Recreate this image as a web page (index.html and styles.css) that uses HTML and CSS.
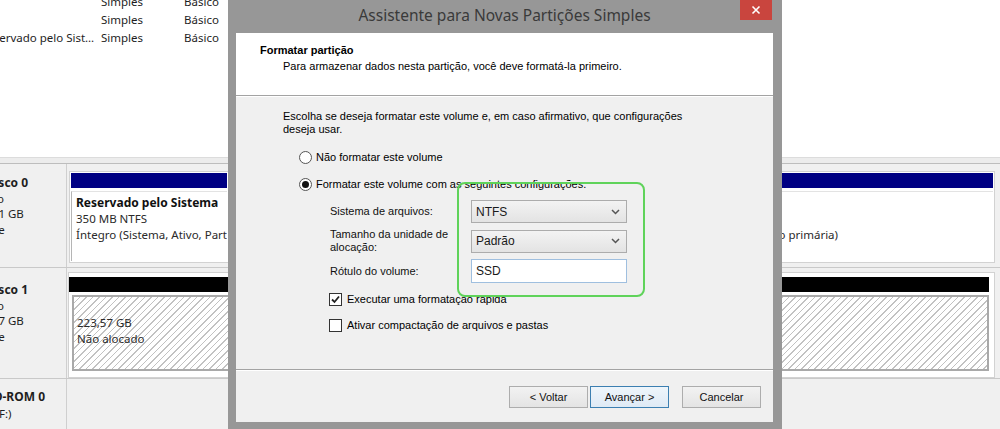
FILE: index.html
```html
<!DOCTYPE html>
<html lang="pt-BR">
<head>
<meta charset="utf-8">
<title>Assistente para Novas Partições Simples</title>
<link rel="stylesheet" href="styles.css">
</head>
<body>
<div class="mmc">
  <div class="vol-list">
    <div class="vol-rows">
      <div class="vol-row"><span class="c1"></span><span class="c2">Simples</span><span class="c3">Básico</span></div>
      <div class="vol-row"><span class="c1"></span><span class="c2">Simples</span><span class="c3">Básico</span></div>
      <div class="vol-row"><span class="c1">Reservado pelo Sistema</span><span class="c2">Simples</span><span class="c3">Básico</span></div>
    </div>
  </div>
  <div class="splitter"></div>

  <div class="disk disk0">
    <div class="disk-label">
      <div class="dl-title">Disco 0</div>
      <div>Básico</div>
      <div>931,51 GB</div>
      <div>Online</div>
    </div>
    <div class="disk-map">
      <div class="part part-sys">
        <div class="bar bar-blue"></div>
        <div class="part-body">
          <div class="pb-name">Reservado pelo Sistema</div>
          <div>350 MB NTFS</div>
          <div>Íntegro (Sistema, Ativo, Partição primária)</div>
        </div>
      </div>
      <div class="part part-c">
        <div class="bar bar-blue"></div>
        <div class="part-body">
          <div class="pb-name">(C:)</div>
          <div>931,17 GB NTFS</div>
          <div class="pb-long">Íntegro (Inicialização, Arquivo de Paginação, Despejo de Memória, Partição primária)</div>
        </div>
      </div>
    </div>
  </div>

  <div class="disk disk1">
    <div class="disk-label">
      <div class="dl-title">Disco 1</div>
      <div>Básico</div>
      <div>223,57 GB</div>
      <div>Online</div>
    </div>
    <div class="disk-map">
      <div class="part part-free">
        <div class="bar bar-black"></div>
        <div class="part-body hatch">
          <div class="pb-name">&nbsp;</div>
          <div>223,57 GB</div>
          <div>Não alocado</div>
        </div>
      </div>
    </div>
  </div>

  <div class="disk disk-cd">
    <div class="disk-label">
      <div class="dl-title">CD-ROM 0</div>
      <div>DVD (F:)</div>
    </div>
    <div class="disk-map"></div>
  </div>
</div>

<div class="dialog">
  <div class="titlebar">
    <span class="title">Assistente para Novas Partições Simples</span>
    <span class="close">
      <svg width="10" height="10" viewBox="0 0 10 10"><path d="M1.5 1.5 L8.5 8.5 M8.5 1.5 L1.5 8.5" stroke="#fff" stroke-width="1.6"/></svg>
    </span>
  </div>
  <div class="client">
    <div class="wiz-head">
      <div class="wh-title">Formatar partição</div>
      <div class="wh-sub">Para armazenar dados nesta partição, você deve formatá-la primeiro.</div>
    </div>
    <div class="wiz-body">
      <p class="intro">Escolha se deseja formatar este volume e, em caso afirmativo, que configurações<br>deseja usar.</p>
      <div class="radio r1"><span class="rb"></span>Não formatar este volume</div>
      <div class="radio r2"><span class="rb on"></span>Formatar este volume com as seguintes configurações.</div>
      <div class="fmt-grid">
        <span class="fl">Sistema de arquivos:</span>
        <div class="combo"><span>NTFS</span><svg width="9" height="6" viewBox="0 0 9 6"><path d="M1 1 L4.5 4.5 L8 1" fill="none" stroke="#555" stroke-width="1.5"/></svg></div>
        <span class="fl fl2">Tamanho da unidade de<br>alocação:</span>
        <div class="combo"><span>Padrão</span><svg width="9" height="6" viewBox="0 0 9 6"><path d="M1 1 L4.5 4.5 L8 1" fill="none" stroke="#555" stroke-width="1.5"/></svg></div>
        <span class="fl">Rótulo do volume:</span>
        <div class="textbox">SSD</div>
      </div>
      <div class="check c-1"><span class="cb"><svg width="11" height="11" viewBox="0 0 11 11"><path d="M2 5.5 L4.5 8 L9 2.5" fill="none" stroke="#222" stroke-width="1.8"/></svg></span>Executar uma formatação rápida</div>
      <div class="check c-2"><span class="cb"></span>Ativar compactação de arquivos e pastas</div>
    </div>
    <div class="wiz-foot">
      <button class="btn">&lt; Voltar</button>
      <button class="btn btn-default">Avançar &gt;</button>
      <button class="btn btn-cancel">Cancelar</button>
    </div>
  </div>
  <div class="highlight"></div>
</div>
</body>
</html>
```

FILE: styles.css
```css
* { box-sizing: border-box; margin: 0; padding: 0; }
html, body { width: 1000px; height: 429px; overflow: hidden; }
body {
  background: #f0f0f0;
  font-family: "Noto Sans", "Open Sans", sans-serif;
  font-size: 11.5px;
  color: #1e1e1e;
  position: relative;
}

/* ---------- background: disk management ---------- */
.mmc { width: 1000px; height: 429px; overflow: hidden; }

.vol-list { height: 157px; background: #fff; overflow: hidden; }
.vol-rows { margin-top: -7px; }
.vol-row { display: flex; height: 18px; line-height: 18px; white-space: nowrap; }
.c1 {
  width: 121px; margin-left: -20px; padding-right: 6px;
  overflow: hidden; text-overflow: ellipsis;
}
.c2 { width: 83px; }
.c3 { width: 80px; }

.splitter {
  height: 7px;
  background: #ececec;
  border-top: 1px solid #dcdcdc;
  border-bottom: 1px solid #bdbdbd;
}

.disk { display: flex; border-bottom: 1px solid #c9c9c9; box-shadow: 0 1px 0 #fff; }
.disk0 { height: 104px; }
.disk1 { height: 111px; }
.disk-cd { height: 60px; border-bottom: none; }

.disk-label {
  width: 67px;
  flex: none;
  padding-top: 11px;
  line-height: 15.5px;
  white-space: nowrap;
  overflow: hidden;
  border-right: 1px solid #cfcfcf;
  box-shadow: 1px 0 0 #fff;
  background: #f0f0f0;
}
.disk-label > div { margin-left: -31px; }
.disk-label .dl-title { margin-left: -14px; font-weight: 700; font-size: 12px; }
.disk1 .disk-label { padding-top: 14px; }
.disk-cd .disk-label { padding-top: 9px; line-height: 17px; }

.disk-map { flex: 1; display: flex; gap: 4px; padding: 7px 5px 4px 2px; background: #f0f0f0; }
.disk1 .disk-map { padding: 4px 5px 0 1px; }

.part {
  display: flex; flex-direction: column;
  background: #fff;
  border: 1px solid #d2d2d2;
  padding: 1px;
}
.part-sys { width: 160px; flex: none; }
.part-c { flex: 1; }
.part-free { flex: 1; padding: 4px 5px 6px 0; }

.bar { height: 15px; flex: none; }
.bar-blue { background: #000083; }
.bar-black { background: #000; }

.part-body {
  flex: 1;
  margin-top: 3px;
  border-left: 1px solid #b5b5b5;
  border-top: 1px solid #e3e3e3;
  padding: 3px 0 0 4px;
  line-height: 16px;
  white-space: nowrap;
  overflow: hidden;
  color: #2a2a2a;
}
.pb-name { font-weight: 700; font-size: 12px; color: #111; }
.part-c .part-body { padding-left: 0; }
.pb-long { text-align: right; padding-right: 155px; }

.hatch {
  margin-top: 3px;
  margin-left: 3px;
  border: 2px solid #a9a9a9;
  padding: 2px 0 0 3px;
  background: repeating-linear-gradient(135deg, #fff 0 3.6px, #c2c2c2 3.6px 4.6px);
}

/* ---------- dialog ---------- */
.dialog {
  position: absolute;
  left: 228px; top: 0;
  width: 554px; height: 429px;
  background: #979797;
  padding: 0 9px 7px 8px;
  display: flex; flex-direction: column;
  font-family: "Liberation Sans", Arial, sans-serif;
  font-size: 11px;
  color: #000;
}
.titlebar {
  height: 33px; flex: none;
  display: flex; align-items: center; justify-content: center;
  position: relative;
}
.title {
  font-family: "Noto Sans", "Open Sans", sans-serif;
  font-size: 15.5px;
  color: #3a3a3a;
  margin-top: -3px;
}
.close {
  position: absolute; right: 1px; top: 0;
  width: 32px; height: 20px;
  background: #c9453e;
  display: flex; align-items: center; justify-content: center;
}

.client { flex: 1; display: flex; flex-direction: column; background: #f0f0f0; }

.wiz-head {
  height: 63px; flex: none;
  background: #fff;
  border-bottom: 1px solid #a3a3a3;
  padding: 10px 0 0 24px;
  line-height: 14px;
}
.wh-title { font-weight: 700; }
.wh-sub { margin-top: 2px; padding-left: 23px; }

.wiz-body {
  flex: 1;
  border-top: 1px solid #fff;
  border-bottom: 1px solid #a3a3a3;
  padding: 13px 0 0 47px;
}
.intro { line-height: 13px; }

.radio, .check { display: flex; align-items: center; height: 16px; }
.radio { margin-left: 16px; gap: 4px; }
.r1 { margin-top: 13px; }
.r2 { margin-top: 11px; }
.rb {
  width: 13px; height: 13px; border-radius: 50%;
  border: 1px solid #555; background: #fff;
  display: flex; align-items: center; justify-content: center;
}
.rb.on::after { content: ""; width: 7px; height: 7px; border-radius: 50%; background: #111; }

.fmt-grid {
  margin: 8px 0 0 47px;
  display: grid;
  grid-template-columns: 141px 156px;
  row-gap: 5px;
  align-items: center;
}
.fl { line-height: 13px; color: #111; }
.combo, .textbox {
  height: 23px;
  display: flex; align-items: center; justify-content: space-between;
  padding: 0 6px 0 4px;
  font-size: 12px;
  color: #1a1a1a;
}
.combo {
  border: 1px solid #acacac;
  background: linear-gradient(#f3f3f3, #e3e3e3);
}
.textbox {
  height: 24px;
  border: 1px solid #9fbfdf;
  background: #fff;
}

.check { margin-left: 46px; gap: 5px; }
.c-1 { margin-top: 8px; }
.c-2 { margin-top: 10px; }
.cb {
  width: 13px; height: 13px;
  border: 1px solid #333; background: #fff;
  display: flex; align-items: center; justify-content: center;
}

.wiz-foot {
  height: 52px; flex: none;
  border-top: 1px solid #fff;
  display: flex; justify-content: flex-end; align-items: flex-start;
  padding: 15px 12px 0 0;
  gap: 2px;
}
.btn {
  width: 79px; height: 22px;
  border: 1px solid #adadad;
  background: linear-gradient(#f2f2f2, #e4e4e4);
  font-family: "Liberation Sans", Arial, sans-serif;
  font-size: 11px;
  color: #111;
}
.btn-default { border-color: #3c7fb1; background: linear-gradient(#eef5fb, #dfeaf5); }
.btn-cancel { margin-left: 11px; }

.highlight {
  position: absolute;
  left: 229px; top: 182px;
  width: 188px; height: 115px;
  border: 2px solid #5fd35a;
  border-radius: 8px;
}
```
